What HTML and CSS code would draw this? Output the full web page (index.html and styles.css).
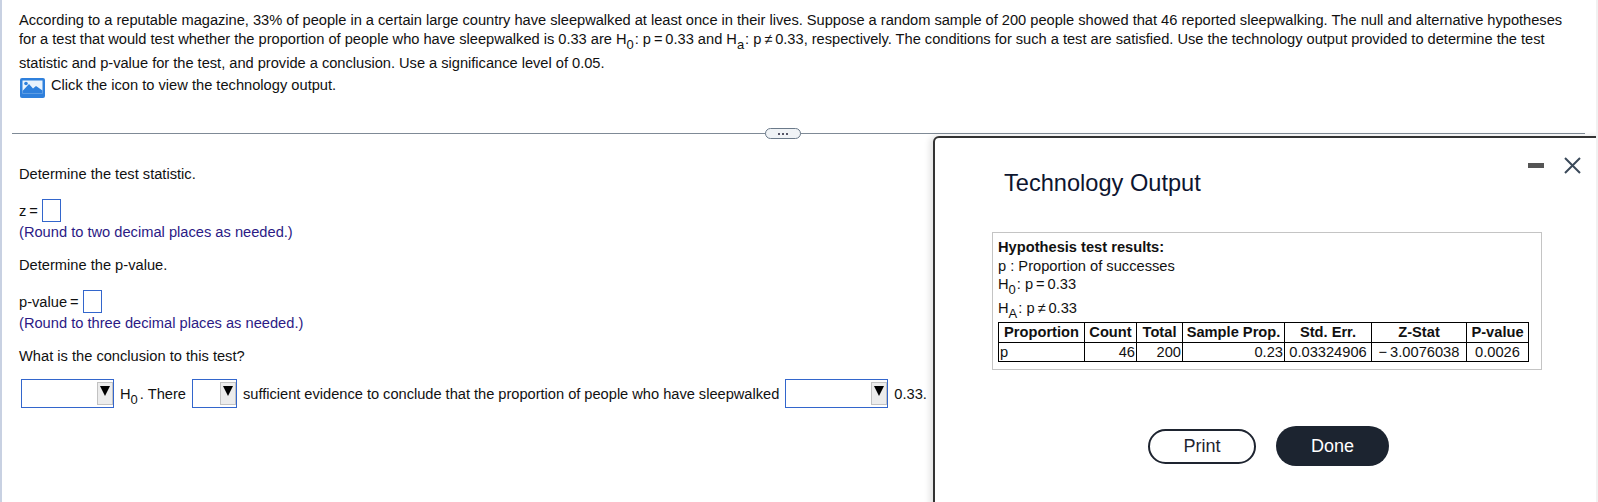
FILE: index.html
```html
<!DOCTYPE html>
<html lang="en">
<head>
    <meta charset="UTF-8">
    <meta name="viewport" content="width=device-width, initial-scale=1.0">
    <link rel="stylesheet" href="styles.css">
    <title>Technology Output</title>
</head>
<body>
    <div class="page">
        <div class="question">
            <p class="intro">According to a reputable magazine, 33% of people in a certain large country have sleepwalked at least once in their lives. Suppose a random sample of 200 people showed that 46 reported sleepwalking. The null and alternative hypotheses for a test that would test whether the proportion of people who have sleepwalked is 0.33 are H<sub>0</sub>: p&#8201;=&#8201;0.33 and H<sub>a</sub>: p&#8201;&ne;&#8201;0.33, respectively. The conditions for such a test are satisfied. Use the technology output provided to determine the test statistic and p-value for the test, and provide a conclusion. Use a significance level of 0.05.</p>
            <div class="icon-row">
                <svg class="picture-icon" width="25" height="20" viewBox="0 0 25 20">
                    <rect x="0" y="0" width="25" height="20" rx="2" fill="#2f80dc"/>
                    <rect x="2.5" y="2.5" width="20" height="13" fill="#eaf3fc"/>
                    <path d="M2.5 15.5 L2.5 13 L9 6 L13 10.5 L16 8 L22.5 12.5 L22.5 15.5 Z" fill="#2f80dc"/>
                    <circle cx="6" cy="5.5" r="1.8" fill="#2f80dc"/>
                </svg>
                <span>Click the icon to view the technology output.</span>
            </div>
        </div>

        <div class="divider">
            <span class="more-pill"><i></i><i></i><i></i></span>
        </div>

        <div class="answers">
            <p class="step">Determine the test statistic.</p>
            <div class="entry-row">z&#8201;=&#8201;<span class="entry-box"></span></div>
            <p class="hint">(Round to two decimal places as needed.)</p>
            <p class="step step-next">Determine the p-value.</p>
            <div class="entry-row">p-value&#8201;=&#8201;<span class="entry-box"></span></div>
            <p class="hint">(Round to three decimal places as needed.)</p>
            <p class="step step-next">What is the conclusion to this test?</p>
            <div class="conclusion">
                <span class="dropdown dropdown-wide"><span class="drop-btn"></span></span>
                <span>H<sub>0</sub>. There</span>
                <span class="dropdown dropdown-small"><span class="drop-btn"></span></span>
                <span class="long-text">sufficient evidence to conclude that the proportion of people who have sleepwalked</span>
                <span class="dropdown dropdown-mid"><span class="drop-btn"></span></span>
                <span>0.33.</span>
            </div>
        </div>
    </div>

    <div class="output-window">
        <div class="window-controls">
            <span class="minimize"></span>
            <svg class="close-x" width="17" height="17" viewBox="0 0 17 17">
                <path d="M1 1 L16 16 M16 1 L1 16" stroke="#3b4a5a" stroke-width="2" fill="none"/>
            </svg>
        </div>
        <h1 class="window-title">Technology Output</h1>
        <div class="results">
            <div class="results-title">Hypothesis test results:</div>
            <div class="results-sub">p : Proportion of successes</div>
            <div class="hyp">H<sub>0</sub>: p&#8201;=&#8201;0.33</div>
            <div class="hyp hyp-alt">H<sub>A</sub>: p&#8201;&ne;&#8201;0.33</div>
            <table class="results-table">
                <tr>
                    <th class="col-prop">Proportion</th>
                    <th class="col-count">Count</th>
                    <th class="col-total">Total</th>
                    <th class="col-sample">Sample Prop.</th>
                    <th class="col-err">Std. Err.</th>
                    <th class="col-z">Z-Stat</th>
                    <th class="col-pval">P-value</th>
                </tr>
                <tr>
                    <td>p</td>
                    <td class="num">46</td>
                    <td class="num">200</td>
                    <td class="num">0.23</td>
                    <td class="mid">0.03324906</td>
                    <td class="mid">&minus;&#8201;3.0076038</td>
                    <td class="mid">0.0026</td>
                </tr>
            </table>
        </div>
        <div class="window-buttons">
            <button class="btn-print">Print</button>
            <button class="btn-done">Done</button>
        </div>
    </div>
    <div class="scroll-strip"></div>
</body>
</html>
```

FILE: styles.css
```css
html, body {
    margin: 0;
    padding: 0;
    height: 100%;
    overflow: hidden;
}

body {
    font-family: "Liberation Sans", Arial, sans-serif;
    font-size: 14.667px;
    color: #111;
    background-color: white;
    border-left: 2px solid #c8d1e2;
    box-sizing: border-box;
}

p {
    margin: 0;
}

sub {
    font-size: 13px;
    line-height: 0;
    vertical-align: -5px;
    margin-right: 1px;
}

.question {
    padding: 11px 30px 0 17px;
}

.intro {
    line-height: 19px;
    letter-spacing: -0.02px;
}

.intro sub {
    line-height: 18px;
}

.icon-row {
    display: flex;
    align-items: center;
    gap: 6px;
    margin-top: 2px;
    margin-left: 1px;
    height: 20px;
}

.picture-icon {
    margin-top: 6px;
}

.divider {
    position: relative;
    height: 1px;
    margin: 38px 13px 0 10px;
    background-color: #7f8a96;
}

.more-pill {
    position: absolute;
    left: 753px;
    top: -5px;
    width: 36px;
    height: 11px;
    box-sizing: border-box;
    border: 1px solid #6b7a8a;
    border-radius: 6px;
    background-color: #f0f3f6;
    display: flex;
    align-items: center;
    justify-content: center;
    gap: 2px;
}

.more-pill i {
    width: 2px;
    height: 2px;
    background-color: #556;
}

.answers {
    padding: 31px 0 0 17px;
}

.step {
    line-height: 18px;
}

.step-next {
    margin-top: 15px;
}

.entry-row {
    display: flex;
    align-items: center;
    margin-top: 16px;
    height: 23px;
}

.entry-row + .hint {
    margin-top: 1px;
}

.entry-box {
    width: 19px;
    height: 23px;
    box-sizing: border-box;
    border: 1px solid #3366cc;
    margin-left: 1px;
}

.hint {
    color: #2b1a85;
    line-height: 18px;
}

.conclusion {
    display: flex;
    align-items: center;
    gap: 6px;
    margin-top: 14px;
    margin-left: 2px;
}

.conclusion sub {
    margin-right: 2px;
}

.long-text {
    letter-spacing: -0.025px;
}

.dropdown {
    display: flex;
    justify-content: flex-end;
    align-items: flex-start;
    height: 29px;
    box-sizing: border-box;
    border: 1px solid #3366cc;
    padding: 2px 0 0 0;
}

.dropdown-wide {
    width: 93px;
}

.dropdown-small {
    width: 45px;
}

.dropdown-mid {
    width: 103px;
}

.drop-btn {
    position: relative;
    width: 16px;
    height: 23px;
    box-sizing: border-box;
    background-color: #ececec;
    border: 1px solid #c2c2c2;
}

.drop-btn::after {
    content: "";
    position: absolute;
    left: 2px;
    top: 3px;
    border-left: 5px solid transparent;
    border-right: 5px solid transparent;
    border-top: 10px solid black;
}

/* floating window on top of the question */
.output-window {
    position: absolute;
    left: 933px;
    top: 136px;
    width: 680px;
    height: 420px;
    box-sizing: border-box;
    border: 2px solid #333;
    border-radius: 6px;
    background-color: white;
    box-shadow: -3px 0 6px rgba(0, 0, 0, 0.12);
    padding: 0 0 0 57px;
}

.scroll-strip {
    position: fixed;
    top: 0;
    right: 0;
    bottom: 0;
    width: 2px;
    background-color: #f1f1f1;
}

.window-controls {
    position: absolute;
    left: 593px;
    top: 19px;
    display: flex;
    align-items: center;
    gap: 20px;
}

.minimize {
    width: 16px;
    height: 5px;
    background-color: #555;
}

.window-title {
    margin: 0;
    padding: 31px 0 0 13px;
    margin-left: -1px;
    font-size: 23.6px;
    font-weight: normal;
    line-height: 28px;
    color: #0d1530;
}

.results {
    width: 550px;
    height: 138px;
    box-sizing: border-box;
    border: 1px solid #c4c4c4;
    margin: 35px 0 0 0;
    padding: 6px 0 0 5px;
    line-height: 17px;
}

.results-title {
    font-weight: bold;
}

.results-sub {
    margin: 2px 0 -2px;
}

.hyp {
    line-height: 22px;
}

.hyp-alt {
    margin-top: 2px;
}

.results-table {
    border-collapse: collapse;
    table-layout: fixed;
    width: 530px;
    margin-top: 3px;
}

.results-table th,
.results-table td {
    box-sizing: border-box;
    border: 1px solid black;
    padding: 0 1px;
    height: 19px;
    line-height: 17px;
}

.results-table th {
    height: 20px;
    text-align: center;
}

.results-table .num {
    text-align: right;
}

.results-table .mid {
    text-align: center;
}

.col-prop { width: 86px; }
.col-count { width: 52px; }
.col-total { width: 46px; }
.col-sample { width: 102px; }
.col-err { width: 87px; }
.col-z { width: 95px; }
.col-pval { width: 62px; }

.window-buttons {
    display: flex;
    align-items: center;
    gap: 20px;
    margin: 56px 0 0 156px;
}

.window-buttons button {
    font-family: inherit;
    font-size: 18px;
    border-radius: 20px;
    cursor: pointer;
}

.btn-print {
    width: 108px;
    height: 35px;
    background-color: white;
    border: 2px solid #1e2430;
    color: #1e2430;
}

.btn-done {
    width: 113px;
    height: 40px;
    background-color: #1c2430;
    border: 0;
    color: white;
}
```
